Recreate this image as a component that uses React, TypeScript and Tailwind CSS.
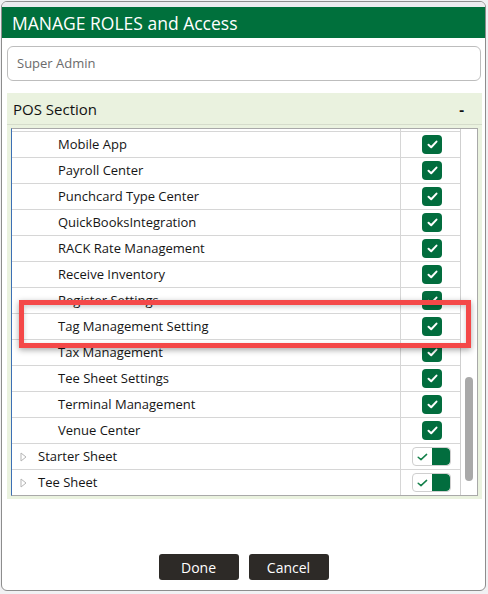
import React from "react";

const rows: { name: string; kind: "sub" | "group" }[] = [
  { name: "", kind: "sub" },
  { name: "Mobile App", kind: "sub" },
  { name: "Payroll Center", kind: "sub" },
  { name: "Punchcard Type Center", kind: "sub" },
  { name: "QuickBooksIntegration", kind: "sub" },
  { name: "RACK Rate Management", kind: "sub" },
  { name: "Receive Inventory", kind: "sub" },
  { name: "Register Settings", kind: "sub" },
  { name: "Tag Management Setting", kind: "sub" },
  { name: "Tax Management", kind: "sub" },
  { name: "Tee Sheet Settings", kind: "sub" },
  { name: "Terminal Management", kind: "sub" },
  { name: "Venue Center", kind: "sub" },
  { name: "Starter Sheet", kind: "group" },
  { name: "Tee Sheet", kind: "group" },
];

function Check() {
  return (
    <div className="w-[20px] h-[19px] rounded-[4px] bg-[#026d3e] flex items-center justify-center">
      <svg width="11" height="9" viewBox="0 0 11 9">
        <polyline points="1.5,4.8 4.2,7.3 9.5,1.6" fill="none" stroke="#ffffff" strokeWidth="2" strokeLinecap="round" strokeLinejoin="round" />
      </svg>
    </div>
  );
}

function Toggle() {
  return (
    <div className="w-[39px] h-[19px] rounded-[4px] border border-[#cfcfcf] flex overflow-hidden bg-white">
      <div className="w-[19px] flex items-center justify-center">
        <svg width="11" height="8" viewBox="0 0 11 8">
          <polyline points="1.2,4.2 4,6.6 9.6,1.4" fill="none" stroke="#14804a" strokeWidth="1.5" strokeLinecap="round" strokeLinejoin="round" />
        </svg>
      </div>
      <div className="flex-1 bg-[#026d3e] rounded-r-[4px]" />
    </div>
  );
}

function Triangle() {
  return (
    <svg width="7" height="10" viewBox="0 0 7 10">
      <polygon points="1,1 6,5 1,9" fill="none" stroke="#b5b5b5" strokeWidth="1" strokeLinejoin="round" />
    </svg>
  );
}

export default function App() {
  const font = { fontFamily: '"Open Sans", "Noto Sans", sans-serif' };
  return (
    <div className="w-[488px] h-[594px] bg-[#f1f1f3] overflow-hidden" style={font}>
      <div className="relative ml-[1px] mt-[1px] w-[485px] h-[590px] border border-[#8d8d8d] rounded-[6px] bg-white overflow-hidden flex flex-col">
        <div className="h-[5px] bg-[#ececef]" />
        <div className="h-[31px] bg-[#00703c] text-white text-[17.5px] leading-[33px] pl-[10px]">
          MANAGE ROLES and Access
        </div>
        <div className="pl-[5px] pt-[8px]">
          <div className="w-[474px] h-[35px] border border-[#bdbdbd] rounded-[6px] flex items-center pl-[9px] text-[13px] text-[#6b6b6b]">
            Super Admin
          </div>
        </div>
        <div className="pl-[5px] pt-[12px]">
          <div className="w-[475px] bg-[#eaf2df] px-[4px] pb-[3px]">
            <div className="h-[32px] -mx-[4px] px-[6px] pt-[2px] flex items-center justify-between border-b border-[#d5dccb] text-[15px] text-[#111]">
              <span>POS Section</span>
              <span className="pr-[12px] font-bold">-</span>
            </div>
            <div className="mt-[3px] h-[368px] border border-[#a9a9a9] border-l-[#3d6fb4] bg-white flex overflow-hidden">
              <div className="flex-1 overflow-hidden">
                <div className="-mt-[23px]">
                  {rows.map((r, i) => (
                    <div key={i} className="h-[26px] border-b border-[#d6d6d6] flex">
                      <div className="flex-1 border-r border-[#d6d6d6] flex items-center text-[13px] text-[#151515]">
                        {r.kind === "sub" ? (
                          <span className="pl-[46px]">{r.name}</span>
                        ) : (
                          <>
                            <span className="pl-[8px] w-[26px] flex items-center"><Triangle /></span>
                            <span>{r.name}</span>
                          </>
                        )}
                      </div>
                      <div className={`w-[59px] flex items-center ${r.kind === "sub" ? "pl-[21px]" : "pl-[11px]"}`}>
                        {r.kind === "sub" ? <Check /> : <Toggle />}
                      </div>
                    </div>
                  ))}
                </div>
              </div>
              <div className="w-[17px] border-l border-[#cfcfcf] bg-white flex justify-center">
                <div className="mt-[248px] w-[8px] h-[104px] rounded-full bg-[#a9a9a9]" />
              </div>
            </div>
          </div>
        </div>
        <div className="flex-1" />
        <div className="flex justify-center gap-[10px] pb-[10px]">
          <button className="w-[80px] h-[26px] rounded-[3px] bg-[#2d2a27] text-white text-[14px]">Done</button>
          <button className="w-[80px] h-[26px] rounded-[3px] bg-[#2d2a27] text-white text-[14px]">Cancel</button>
        </div>
        <div className="absolute left-[17px] top-[298px] w-[452px] h-[48px] border-[5px] border-[#f44848] shadow-[0_2px_6px_rgba(0,0,0,0.35),inset_0_2px_5px_rgba(0,0,0,0.2)]" />
      </div>
    </div>
  );
}
